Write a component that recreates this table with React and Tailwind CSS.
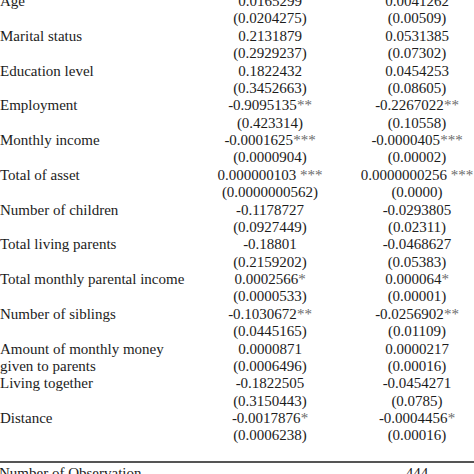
import React from "react";

const rows = [
  { label: ["Age"], a: ["0.0165299", ""], sa: "(0.0204275)", b: ["0.0041262", ""], sb: "(0.00509)" },
  { label: ["Marital status"], a: ["0.2131879", ""], sa: "(0.2929237)", b: ["0.0531385", ""], sb: "(0.07302)" },
  { label: ["Education level"], a: ["0.1822432", ""], sa: "(0.3452663)", b: ["0.0454253", ""], sb: "(0.08605)" },
  { label: ["Employment"], a: ["-0.9095135", "**"], sa: "(0.423314)", b: ["-0.2267022", "**"], sb: "(0.10558)" },
  { label: ["Monthly income"], a: ["-0.0001625", "***"], sa: "(0.0000904)", b: ["-0.0000405", "***"], sb: "(0.00002)" },
  { label: ["Total of asset"], a: ["0.000000103 ", "***"], sa: "(0.0000000562)", b: ["0.0000000256 ", "***"], sb: "(0.0000)" },
  { label: ["Number of children"], a: ["-0.1178727", ""], sa: "(0.0927449)", b: ["-0.0293805", ""], sb: "(0.02311)" },
  { label: ["Total living parents"], a: ["-0.18801", ""], sa: "(0.2159202)", b: ["-0.0468627", ""], sb: "(0.05383)" },
  { label: ["Total monthly parental income"], a: ["0.0002566", "*"], sa: "(0.0000533)", b: ["0.000064", "*"], sb: "(0.00001)" },
  { label: ["Number of siblings"], a: ["-0.1030672", "**"], sa: "(0.0445165)", b: ["-0.0256902", "**"], sb: "(0.01109)" },
  { label: ["Amount of monthly money", "given to parents"], a: ["0.0000871", ""], sa: "(0.0006496)", b: ["0.0000217", ""], sb: "(0.00016)" },
  { label: ["Living together"], a: ["-0.1822505", ""], sa: "(0.3150443)", b: ["-0.0454271", ""], sb: "(0.0785)" },
  { label: ["Distance"], a: ["-0.0017876", "*"], sa: "(0.0006238)", b: ["-0.0004456", "*"], sb: "(0.00016)" },
];

function Coef({ v }) {
  return (
    <div className="text-center whitespace-pre">
      {v[0]}
      {v[1] && <span className="text-[#6b6b6b]">{v[1]}</span>}
    </div>
  );
}

export default function App() {
  return (
    <div
      className="w-[474px] h-[474px] overflow-hidden bg-white text-[#1c1c1c] text-[15px] leading-[17.375px]"
      style={{ fontFamily: '"Liberation Serif", "Times New Roman", serif' }}
    >
      <div className="-mt-[7px]">
        {rows.map((r) => (
          <div key={r.label[0]} className="grid grid-cols-[195px_150px_144px]">
            <div className="whitespace-nowrap">
              <div>{r.label[0]}</div>
              {r.label[1] && <div>{r.label[1]}</div>}
            </div>
            <div>
              <Coef v={r.a} />
              <div className="text-center">{r.sa}</div>
            </div>
            <div>
              <Coef v={r.b} />
              <div className="text-center">{r.sb}</div>
            </div>
          </div>
        ))}
        <div className="mt-[16px] border-t-2 border-[#555] pt-[2px] grid grid-cols-[195px_150px_144px]">
          <div className="whitespace-nowrap -ml-px">Number of Observation</div>
          <div></div>
          <div className="text-center">444</div>
        </div>
      </div>
    </div>
  );
}
